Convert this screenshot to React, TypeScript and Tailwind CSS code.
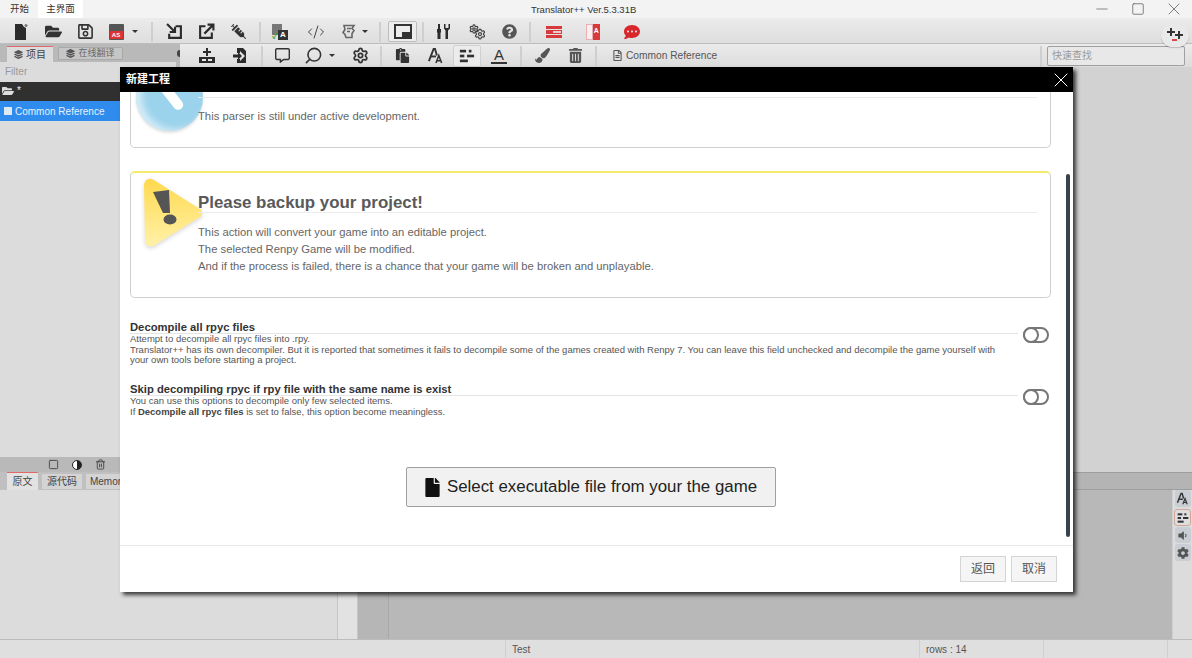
import { ReactNode } from 'react'
import {
  FaCog,
  FaCommentDots,
  FaFile,
  FaFolderOpen,
  FaLayerGroup,
  FaPaintBrush,
  FaPaste,
  FaQuestionCircle,
  FaRegCommentAlt,
  FaRegFileAlt,
  FaRegSave,
  FaSyringe,
  FaTrashAlt,
  FaVolumeDown,
} from 'react-icons/fa'
import { CodeXml, Minus, Search, Settings, Square, Trash2, X } from 'lucide-react'

function Tool({ w = 'w-[32px]', children }: { w?: string; children: ReactNode }) {
  return <div className={`${w} flex h-full flex-none items-center justify-center text-[#333]`}>{children}</div>
}

function Sep() {
  return <div className="mx-[1px] h-[20px] w-[2px] flex-none bg-[#cfcfcf]" />
}

function Caret() {
  return <div className="h-0 w-0 border-x-[3px] border-t-[3px] border-x-transparent border-t-[#333]" />
}

function FontSizeIcon({ size = 18 }: { size?: number }) {
  return (
    <svg width={size} height={size} viewBox="0 0 18 18" fill="none" stroke="#333" strokeWidth="2">
      <path d="M2 15 7 2h1.500l2 7" />
      <path d="M3.500 10h6" />
      <path d="M9.500 17l3-8 3 8M10.500 14.500h4" strokeWidth="1.600" />
    </svg>
  )
}

function ListIcon({ size = 18 }: { size?: number }) {
  return (
    <svg width={size} height={size} viewBox="0 0 18 18" fill="#333">
      <rect x="1" y="2" width="7" height="3" />
      <rect x="11" y="2" width="3" height="3" />
      <rect x="1" y="7.500" width="5" height="3" />
      <rect x="9" y="7.500" width="8" height="3" />
      <rect x="1" y="13" width="9" height="3" />
    </svg>
  )
}

function TabIcon() {
  return <FaLayerGroup size={9} className="text-[#555]" />
}

function Toolbar1() {
  return (
    <div className="flex-none">
      <div className="flex h-[25px] items-center bg-gradient-to-b from-[#ebebeb] to-[#dedede] pt-[2px] pl-[5px]">
        <Tool>
          <svg width="16" height="18" viewBox="0 0 16 18" fill="#2b2b2b">
            <path d="M2 1h7l2 3 2 1v12H2z" />
            <circle cx="13" cy="2.500" r="1.500" fill="#777" />
          </svg>
        </Tool>
        <Tool><FaFolderOpen size={17} /></Tool>
        <Tool><FaRegSave size={17} /></Tool>
        <Tool w="w-[30px]">
          <div className="flex h-[16px] w-[15px] flex-col justify-end rounded-[1px] bg-[#555] px-[1px] pb-[1px]">
            <span className="bg-[#d33] text-center text-[6px] leading-[8px] font-bold text-white">AS</span>
          </div>
        </Tool>
        <Tool w="w-[8px]"><Caret /></Tool>
        <div className="w-[11px] flex-none" />
        <Sep />
        <div className="w-[4px] flex-none" />
        <Tool>
          <svg width="17" height="17" viewBox="0 0 16 16" fill="none" stroke="#2b2b2b" strokeWidth="2">
            <path d="M1 1l7 7M3.500 8.500H8.500V3.500" />
            <path d="M9 3h5v11H3V10" />
          </svg>
        </Tool>
        <Tool>
          <svg width="17" height="17" viewBox="0 0 16 16" fill="none" stroke="#2b2b2b" strokeWidth="2">
            <path d="M7 3H2v11h11V9" />
            <path d="M6 10l8-8M9 1.500h5.500V7" />
          </svg>
        </Tool>
        <Tool><FaSyringe size={15} className="-scale-x-100" /></Tool>
        <div className="w-[4px] flex-none" />
        <Sep />
        <div className="w-[2px] flex-none" />
        <Tool>
          <div className="relative h-[16px] w-[16px]">
            <div className="absolute top-0 left-0 h-[11px] w-[10px] bg-[#777]" />
            <div className="absolute right-0 bottom-0 flex h-[10px] w-[10px] items-center justify-center bg-[#333] text-[8px] font-bold text-white">A</div>
            <span className="absolute bottom-[-1px] left-0 text-[8px] leading-[8px] font-bold text-[#3aa33a]">✓</span>
          </div>
        </Tool>
        <Tool w="w-[40px]"><CodeXml size={18} strokeWidth={1.200} /></Tool>
        <Tool w="w-[26px]">
          <svg width="16" height="17" viewBox="0 0 16 16" fill="none" stroke="#666" strokeWidth="1.600">
            <path d="M3 2h10l-2 3 2 2-2 3v4H5l-1-3-2-2 2-3z" />
            <path d="M6 5h4M6 8h3" />
          </svg>
        </Tool>
        <Tool w="w-[6px]"><Caret /></Tool>
        <div className="w-[10px] flex-none" />
        <Sep />
        <div className="w-[6px] flex-none" />
        <div className="flex h-[21px] w-[29px] flex-none items-center justify-center rounded-[2px] border border-[#bdbdbd] bg-[#ededed]">
          <div className="flex h-[15px] w-[18px] items-end justify-end border-2 border-[#333]">
            <div className="h-[5px] w-[8px] bg-[#333]" />
          </div>
        </div>
        <div className="w-[4px] flex-none" />
        <Sep />
        <div className="w-[2px] flex-none" />
        <Tool w="w-[34px]">
          <svg width="16" height="17" viewBox="0 0 16 17" fill="#2b2b2b">
            <path d="M2 1h2v5h1v3l-.5 1v6h-3v-6L1 9V6h1z" />
            <path d="M8 1h1.500v4h3V1H14v4.500l-2 2V16h-2.500V7.500l-1.500-2z" />
          </svg>
        </Tool>
        <Tool>
          <div className="relative h-[16px] w-[17px]">
            <Settings size={10} strokeWidth={3} className="absolute top-0 left-0 text-[#444]" />
            <Settings size={12} strokeWidth={2.500} className="absolute right-0 bottom-0 text-[#444]" />
          </div>
        </Tool>
        <Tool><FaQuestionCircle size={15} className="text-[#555]" /></Tool>
        <div className="w-[3px] flex-none" />
        <Sep />
        <div className="w-[4px] flex-none" />
        <Tool w="w-[36px]">
          <div className="flex w-[16px] flex-col gap-[1px]">
            <div className="h-[3px] bg-[#d8393d]" />
            <div className="flex h-[4px] justify-end bg-[#d8393d] py-[1px] pr-[1px]">
              <div className="h-[2px] w-[8px] bg-[#f3c9c9]" />
            </div>
            <div className="h-[3px] bg-[#d8393d]" />
          </div>
        </Tool>
        <Tool w="w-[42px]">
          <div className="flex h-[16px] w-[14px]">
            <div className="h-full w-[7px] border border-[#e8b0b0] bg-[#fbeeee]" />
            <div className="flex h-full w-[8px] items-center justify-center bg-[#d8393d] text-[7px] font-bold text-white">A</div>
          </div>
        </Tool>
        <Tool w="w-[36px]"><FaCommentDots size={16} className="text-[#d8262b]" /></Tool>
      </div>
      <div className="h-px bg-[#bdbdbd]" />
    </div>
  )
}

function Toolbar2() {
  return (
    <div className="flex h-[23px] flex-none items-center bg-gradient-to-b from-[#ebebeb] to-[#dcdcdc]">
      <div className="w-[11px] flex-none" />
      <Tool>
        <svg width="16" height="16" viewBox="0 0 16 16" fill="#2b2b2b">
          <path d="M7 0h2v3h3v2H9v3H7V5H4V3h3z" />
          <path d="M0 9h16v6H0z" />
          <path d="M3 11h4v2H3zM9 11h4v2H9z" fill="#e6e6e6" />
        </svg>
      </Tool>
      <Tool>
        <svg width="15" height="17" viewBox="0 0 15 17" fill="#2b2b2b">
          <path d="M5 1h6l3 3v12H5v-4h3l0 2 5-5-5-5v2H5z" />
          <path d="M1 7.500h5V5l4 4-4 4v-2.500H1z" />
        </svg>
      </Tool>
      <div className="w-[5px] flex-none" />
      <Sep />
      <Tool w="w-[36px]"><FaRegCommentAlt size={15} /></Tool>
      <Tool w="w-[26px]"><Search size={19} strokeWidth={2} className="-scale-x-100" /></Tool>
      <Tool w="w-[12px]"><Caret /></Tool>
      <div className="w-[6px] flex-none" />
      <Tool><Settings size={17} strokeWidth={2.500} /></Tool>
      <div className="w-[3px] flex-none" />
      <Sep />
      <Tool w="w-[38px]"><FaPaste size={15} /></Tool>
      <Tool w="w-[28px]"><FontSizeIcon size={17} /></Tool>
      <div className="w-[4px] flex-none" />
      <div className="flex h-[22px] w-[28px] flex-none items-center justify-center rounded-[2px] border border-[#cfcfcf] bg-[#ececec]">
        <ListIcon size={16} />
      </div>
      <Tool w="w-[36px]">
        <div className="flex flex-col items-center">
          <span className="text-[15px] leading-[13px] text-[#333]">A</span>
          <div className="mt-[1px] h-[2px] w-[16px] bg-[#333]" />
        </div>
      </Tool>
      <div className="w-[2px] flex-none" />
      <Sep />
      <Tool w="w-[38px]"><FaPaintBrush size={15} className="text-[#555]" /></Tool>
      <Tool w="w-[28px]"><FaTrashAlt size={15} className="text-[#555]" /></Tool>
      <div className="w-[5px] flex-none" />
      <Sep />
      <div className="w-[14px] flex-none" />
      <FaRegFileAlt size={11} className="flex-none text-[#555]" />
      <span className="ml-[3px] text-[10.200px] text-[#555]">Common Reference</span>
      <div className="flex-1" />
      <Sep />
      <div className="mr-[7px] ml-[4px] flex h-[20px] w-[138px] flex-none items-center rounded-[2px] border border-[#a0a0a0] bg-[#e8e8e8] px-[4px] text-[10px] text-[#999]">快速查找</div>
    </div>
  )
}

function LeftColumn() {
  return (
    <div className="flex w-[180px] flex-none flex-col bg-[#b9b9b9]">
      <div className="flex h-[18px] flex-none items-end gap-[5px] pl-[7px]">
        <div className="flex h-[16px] w-[46px] items-center justify-center gap-[3px] border-t border-[#e06a6a] bg-[#dcdcdc] text-[10px] text-[#444]">
          <TabIcon />项目
        </div>
        <div className="mb-[2px] flex h-[13px] w-[65px] items-center justify-center gap-[3px] rounded-t-[2px] border border-[#a9a9a9] bg-[#c6c6c6] text-[9px] text-[#666]">
          <TabIcon />在线翻译
        </div>
        <div className="mb-[5px] ml-auto h-[7px] w-[3px] rounded-l-full bg-[#444]" />
      </div>
      <div className="flex h-[395px] w-[176px] flex-none flex-col bg-[#dcdcdc]">
        <div className="flex h-[20px] flex-none items-center pb-[2px] pl-[5px] text-[10px] text-[#999]">Filter</div>
        <div className="flex h-[19px] flex-none items-center gap-[3px] bg-[#303030] pb-[2px] pl-[2px] text-[10px] text-[#eee]">
          <FaFolderOpen size={12} className="text-[#ddd]" />*
        </div>
        <div className="flex h-[20px] flex-none items-center gap-[3px] bg-[#2f8ced] pl-[4px] text-[10px] text-[#e8f1fb]">
          <div className="h-[8px] w-[8px] bg-[#dfe9f4]" />Common Reference
        </div>
      </div>
      <div className="flex h-[15px] flex-none items-center pl-[48px]">
        <Square size={11} className="text-[#444]" />
        <div className="ml-[13px] h-[10px] w-[10px] rounded-full border border-[#222] bg-[linear-gradient(90deg,#fff_50%,#222_50%)]" />
        <Trash2 size={11} className="ml-[13px] text-[#444]" />
      </div>
      <div className="flex h-[18px] flex-none items-end gap-[4px] bg-[#c0c0c0] pl-[7px] text-[10px] text-[#444]">
        <div className="flex h-[18px] w-[31px] items-center justify-center border-t border-[#e06a6a] bg-[#e2e2e2]">原文</div>
        <div className="mb-[1px] flex h-[15px] w-[40px] items-center justify-center bg-[#d4d4d4]">源代码</div>
        <div className="mb-[1px] flex h-[15px] w-[44px] items-center justify-center bg-[#d4d4d4]">Memory</div>
      </div>
      <div className="flex-1 bg-[#dcdcdc]" />
    </div>
  )
}

function Workspace() {
  return (
    <div className="flex min-h-0 flex-1 flex-col">
      <div className="h-[405px] flex-none bg-[#d2d2d2]" />
      <div className="h-[18px] flex-none border-y border-[#9d9d9d] bg-[#b4b4b4]" />
      <div className="flex min-h-0 flex-1">
        <div className="w-[157px] flex-none bg-[#dcdcdc]" />
        <div className="w-[21px] flex-none border-x border-[#c6c6c6] bg-[#e2e2e2]" />
        <div className="w-[31px] flex-none border-r border-[#a8a8a8] bg-[#b6b6b6]" />
        <div className="flex-1 bg-[#b8b8b8]" />
        <div className="flex w-[20px] flex-none flex-col items-center border-l border-[#cfcfcf] bg-[#dcdcdc]">
          <div className="flex h-[17px] w-[16px] items-center justify-center rounded-[3px] bg-[#c8ced3]"><FontSizeIcon size={13} /></div>
          <div className="mt-[2px] flex h-[17px] w-[17px] items-center justify-center rounded-[3px] border border-[#d0a898] bg-[#dedede]"><ListIcon size={12} /></div>
          <div className="mt-px flex h-[16px] w-[16px] items-center justify-center rounded-[3px] bg-[#c8ced3]"><FaVolumeDown size={11} className="text-[#555]" /></div>
          <div className="mt-px flex h-[17px] w-[16px] items-center justify-center rounded-[3px] bg-[#c8ced3]"><FaCog size={12} className="text-[#555]" /></div>
        </div>
      </div>
    </div>
  )
}

function Toggle() {
  return (
    <div className="relative h-[16px] w-[26px] flex-none rounded-full border-2 border-[#777]">
      <div className="absolute top-[-2px] left-[-2px] h-[16px] w-[16px] rounded-full border-2 border-[#777] bg-white" />
    </div>
  )
}

function Option({ title, children }: { title: string; children: ReactNode }) {
  return (
    <div className="mr-[2px] flex items-start">
      <div className="min-w-0 flex-1">
        <div className="h-[14px] border-b border-[#e4e4e4] text-[11.250px] leading-[15px] font-bold text-[#333]">{title}</div>
        <div className="pr-[16px] text-[9.500px] leading-[10.500px] text-[#555]">{children}</div>
      </div>
      <div className="mt-[7px] ml-[5px]">
        <Toggle />
      </div>
    </div>
  )
}

function Modal() {
  return (
    <div className="absolute top-[67px] left-[120px] flex h-[525px] w-[953px] flex-col bg-white shadow-[3px_3px_4px_rgba(30,30,30,0.85)]">
      <div className="flex h-[25px] flex-none items-center justify-between bg-black pl-[6px] text-white">
        <span className="text-[11px] font-bold">新建工程</span>
        <X size={24} strokeWidth={1} />
      </div>
      <div className="relative min-h-0 flex-1 overflow-hidden">
        <div className="absolute top-[82px] right-[3px] h-[363px] w-[4px] rounded-full bg-[#38424c]" />
        <div className="pr-[22px] pl-[10px]">
          <div className="relative h-[56px] overflow-hidden rounded-b-[5px] border-x border-b border-[#cfcfcf] pl-[67px]">
            <div className="absolute top-[-28px] left-[5px] h-[67px] w-[67px] rounded-full bg-[#9cd3ec] shadow-[inset_6px_-2px_6px_rgba(255,255,255,0.55),0_2px_3px_rgba(0,0,0,0.12)]">
              <div className="absolute top-[18px] left-[31px] h-[30px] w-[10px] -rotate-[38deg] rounded-full bg-white" />
            </div>
            <div className="relative mt-[5px] mr-[13px] h-px bg-[#e8e8e8]" />
            <p className="relative mt-[11px] text-[11.250px] leading-[14px] text-[#666]">This parser is still under active development.</p>
          </div>
          <div className="relative mt-[23px] h-[127px] rounded-[5px] border border-t-[2px] border-[#cfcfcf] border-t-[#f5ea6a] pt-[21px] pl-[67px]">
            <svg className="absolute top-[4px] left-[12px] drop-shadow-[0_2px_2px_rgba(0,0,0,0.15)]" width="64" height="72" viewBox="0 0 64 72">
              <defs>
                <linearGradient id="warn" x1="0" y1="0" x2="0" y2="1">
                  <stop offset="0" stopColor="#ffd94d" />
                  <stop offset="1" stopColor="#fff1a8" />
                </linearGradient>
              </defs>
              <path d="M1 9c0-6 5-9 10-6l46 29c3 2 3 6 0 8L12 68c-5 3-10 1-10-5z" fill="url(#warn)" />
              <path d="M10 15l16-2 1 23-7 0z" fill="#555" />
              <ellipse cx="27" cy="42.500" rx="6.500" ry="5" fill="#555" />
            </svg>
            <h2 className="relative text-[16.875px] leading-[18px] font-bold text-[#595959]">Please backup your project!</h2>
            <div className="relative mr-[13px] h-px bg-[#ececec]" />
            <div className="relative mt-[11px] text-[11.250px] leading-[17px] text-[#666]">
              <p>This action will convert your game into an editable project.</p>
              <p>The selected Renpy Game will be modified.</p>
              <p>And if the process is failed, there is a chance that your game will be broken and unplayable.</p>
            </div>
          </div>
          <div className="mt-[22px] flex flex-col gap-[16.500px]">
            <Option title="Decompile all rpyc files">
              <p>Attempt to decompile all rpyc files into .rpy.</p>
              <p>Translator++ has its own decompiler. But it is reported that sometimes it fails to decompile some of the games created with Renpy 7. You can leave this field unchecked and decompile the game yourself with your own tools before starting a project.</p>
            </Option>
            <Option title="Skip decompiling rpyc if rpy file with the same name is exist">
              <p>You can use this options to decompile only few selected items.</p>
              <p>If <b className="text-[#444]">Decompile all rpyc files</b> is set to false, this option become meaningless.</p>
            </Option>
          </div>
          <div className="mt-[50px] flex justify-center">
            <button className="flex h-[40px] w-[370px] items-center justify-center gap-[5px] rounded-[2px] border border-[#a0a0a0] bg-[#f1f1f1] text-[16.875px] text-[#222]">
              <FaFile size={19} className="-ml-[1px] text-[#111]" />
              Select executable file from your the game
            </button>
          </div>
        </div>
      </div>
      <div className="flex h-[47px] flex-none items-center justify-end gap-[5px] border-t border-[#e8e8e8] pr-[16px]">
        <button className="h-[26px] w-[46px] border border-[#d4d4d4] bg-[#f5f5f5] text-[12px] text-[#555]">返回</button>
        <button className="h-[26px] w-[46px] border border-[#d4d4d4] bg-[#f5f5f5] text-[12px] text-[#555]">取消</button>
      </div>
    </div>
  )
}

export default function App() {
  return (
    <div className="relative flex h-[658px] w-[1192px] flex-col overflow-hidden bg-[#dcdcdc] font-['Liberation_Sans','Noto_Sans_CJK_SC',sans-serif]">
      <div className="relative flex h-[18px] flex-none items-center bg-[#f3f3f3] text-[9.500px] text-[#333]">
        <span className="ml-[10px]">开始</span>
        <span className="ml-[9px] flex h-full w-[45px] items-center justify-center bg-white">主界面</span>
        <span className="absolute top-[3px] left-[531px] leading-[13px]">Translator++ Ver.5.3.31B</span>
        <div className="ml-auto flex items-center text-[#555]">
          <div className="flex w-[36px] justify-center"><Minus size={18} strokeWidth={0.900} /></div>
          <div className="flex w-[36px] justify-center"><Square size={14} strokeWidth={1.200} /></div>
          <div className="flex w-[36px] justify-center"><X size={20} strokeWidth={0.900} /></div>
        </div>
      </div>
      <Toolbar1 />
      <div className="flex min-h-0 flex-1">
        <LeftColumn />
        <div className="flex min-w-0 flex-1 flex-col">
          <Toolbar2 />
          <Workspace />
        </div>
      </div>
      <div className="flex h-[19px] flex-none items-center border-t border-[#bcbcbc] bg-[#dfdfdf] text-[10px] text-[#555]">
        <div className="ml-[505px] flex h-full w-[414px] items-center border-l border-[#cfcfcf] pl-[6px]">Test</div>
        <div className="flex h-full w-[124px] items-center border-l border-[#cfcfcf] pl-[6px]">rows : 14</div>
        <div className="h-full w-[124px] border-l border-[#cfcfcf]" />
        <div className="h-full flex-1 border-l border-[#cfcfcf]" />
      </div>
      <div className="absolute top-[24px] left-[1161px] flex h-[23px] w-[28px] items-center justify-center rounded-full bg-[#e9e9e9] shadow-[0_1px_1px_rgba(0,0,0,0.2)]">
        <svg width="18" height="15" viewBox="0 0 18 15" fill="#333">
          <path d="M4 0h2v3h3v2H6v3H4V5H1V3h3z" />
          <path d="M12 3h2v3h3v2h-3v3h-2V8H9V6h3z" />
          <rect x="6" y="11" width="5" height="2" fill="#d8454a" />
        </svg>
      </div>
      <Modal />
    </div>
  )
}
